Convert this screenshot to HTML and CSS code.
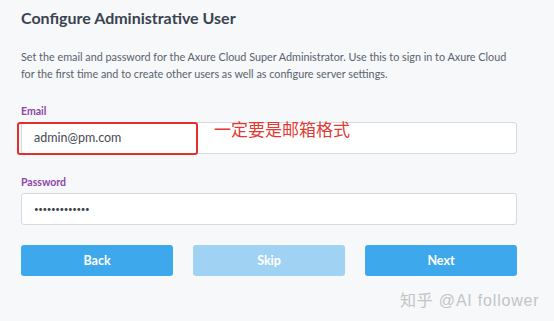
FILE: index.html
```html
<!DOCTYPE html>
<html lang="en">
<head>
    <meta charset="UTF-8">
    <title>Configure Administrative User</title>
    <link rel="stylesheet" href="styles.css">
</head>
<body>
    <div class="page">
        <h1 class="title">Configure Administrative User</h1>
        <p class="intro">
            Set the email and password for the Axure Cloud Super Administrator. Use this to sign in to Axure Cloud
            for the first time and to create other users as well as configure server settings.
        </p>

        <div class="field">
            <label class="field-label">Email</label>
            <div class="input-wrap">
                <div class="input">admin@pm.com</div>
                <div class="highlight"></div>
                <span class="note">一定要是邮箱格式</span>
            </div>
        </div>

        <div class="field">
            <label class="field-label">Password</label>
            <div class="input-wrap">
                <div class="input dots">•••••••••••••</div>
            </div>
        </div>

        <div class="actions">
            <button class="btn">Back</button>
            <button class="btn disabled">Skip</button>
            <button class="btn">Next</button>
        </div>

        <div class="watermark">知乎 @AI follower</div>
    </div>
</body>
</html>
```

FILE: styles.css
```css
* {
    margin: 0;
    padding: 0;
    box-sizing: border-box;
}

body {
    font-family: Lato, 'Open Sans', sans-serif;
    background: #f6f8fa;
    color: #3b4451;
}

.page {
    width: 554px;
    height: 321px;
    padding: 8px 37px 0 21px;
    position: relative;
}

.title {
    font-size: 16px;
    font-weight: 700;
    color: #3a4350;
    line-height: 20px;
}

.intro {
    margin-top: 20px;
    font-size: 10.8px;
    line-height: 17px;
    color: #59626e;
}

.field {
    margin-top: 22px;
}

.field + .field {
    margin-top: 21px;
}

.field-label {
    display: block;
    font-size: 10.5px;
    font-weight: 700;
    color: #8e44ad;
    line-height: 14px;
    margin-bottom: 4px;
}

.input-wrap {
    position: relative;
}

.input {
    height: 32px;
    background: #fff;
    border: 1px solid #d6d9de;
    border-radius: 3px;
    padding-left: 12px;
    font-size: 12.5px;
    line-height: 30px;
    color: #454c55;
}

.input.dots {
    font-size: 8px;
    letter-spacing: -0.4px;
    color: #3d434b;
}

.highlight {
    position: absolute;
    left: -4px;
    top: 0;
    width: 181px;
    height: 33px;
    border: 2px solid #e2302c;
    border-radius: 3px;
}

.note {
    position: absolute;
    left: 193px;
    top: -3px;
    font-family: 'Noto Sans CJK SC', sans-serif;
    font-size: 17px;
    line-height: 20px;
    color: #e23a33;
}

.actions {
    display: flex;
    gap: 20px;
    margin-top: 20px;
}

.btn {
    width: 152px;
    height: 31px;
    border: none;
    border-radius: 3px;
    background: #3ea8ec;
    color: #fff;
    font-family: Lato, sans-serif;
    font-size: 12.5px;
    font-weight: 700;
}

.btn.disabled {
    background: #a0d2f4;
}

.watermark {
    position: absolute;
    left: 400px;
    top: 287px;
    font-family: 'Liberation Sans', 'Noto Sans CJK SC', sans-serif;
    font-size: 16px;
    letter-spacing: 0.8px;
    color: #c2c4c7;
}
```
